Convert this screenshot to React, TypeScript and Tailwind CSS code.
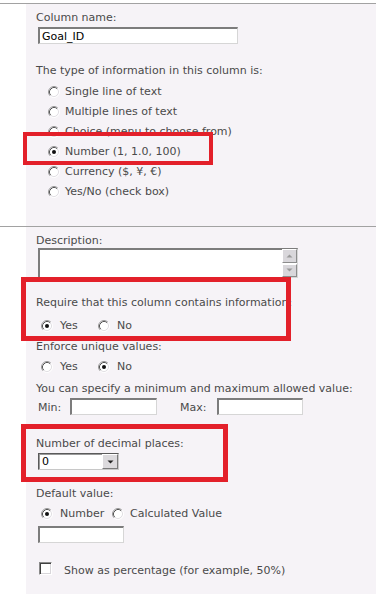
import React from "react";

function Radio({ checked = false }: { checked?: boolean }) {
  return (
    <svg width="12" height="12" viewBox="0 0 12 12" className="shrink-0">
      <circle cx="6" cy="6" r="4.6" fill="#ffffff" />
      <path d="M9.89 2.11A5.5 5.5 0 0 0 2.11 9.89" stroke="#9a9a9a" strokeWidth="1" fill="none" />
      <path d="M9.18 2.82A4.5 4.5 0 0 0 2.82 9.18" stroke="#555555" strokeWidth="1" fill="none" />
      <path d="M9.89 2.11A5.5 5.5 0 0 1 2.11 9.89" stroke="#ffffff" strokeWidth="1" fill="none" />
      <path d="M9.18 2.82A4.5 4.5 0 0 1 2.82 9.18" stroke="#e2e0e4" strokeWidth="1" fill="none" />
      {checked && <circle cx="6" cy="6" r="2" fill="#111111" />}
    </svg>
  );
}

function Checkbox() {
  return (
    <div className="w-[13px] h-[13px] shrink-0 bg-white border-t border-l border-t-[#8a8a8a] border-l-[#8a8a8a] border-r border-b border-r-[#ffffff] border-b-[#ffffff] shadow-[inset_1px_1px_0_#404040,inset_-1px_-1px_0_#d8d6da]" />
  );
}

const inputCls =
  "h-[17px] bg-white border-t-2 border-l-2 border-t-[#7c7c7c] border-l-[#7c7c7c] border-r border-b border-r-[#d6d6d6] border-b-[#d6d6d6]";

function TypeOption({ label, checked = false }: { label: string; checked?: boolean }) {
  return (
    <div className="flex items-center h-[13px] pl-[12px]">
      <Radio checked={checked} />
      <span className="ml-[5px] whitespace-nowrap">{label}</span>
    </div>
  );
}

function YesNo({ yes }: { yes: boolean }) {
  return (
    <div className="flex items-center h-[13px] pl-[5px]">
      <Radio checked={yes} />
      <span className="ml-[7px] w-[38px]">Yes</span>
      <Radio checked={!yes} />
      <span className="ml-[7px]">No</span>
    </div>
  );
}

export default function App() {
  return (
    <div
      className="relative w-[376px] h-[594px] bg-white overflow-hidden text-[11px] leading-[13px] text-[#4a4a4a]"
      style={{ fontFamily: '"DejaVu Sans", Verdana, sans-serif' }}
    >
      <div className="h-[3px]" />
      <div className="h-px bg-[#a2a2a2]" />

      {/* Section 1 */}
      <div className="flex h-[222px]">
        <div className="w-[26px] bg-white" />
        <div className="flex-1 bg-[#f6f3f7] pl-[10px] pt-[7px] flex flex-col">
          <div>Column name:</div>
          <div className={`${inputCls} mt-[3px] ml-[2px] w-[200px] flex items-center pl-[2px] text-[#000]`}>
            Goal_ID
          </div>
          <div className="mt-[20px] whitespace-nowrap">The type of information in this column is:</div>
          <div className="mt-[8px] flex flex-col gap-[7px]">
            <TypeOption label="Single line of text" />
            <TypeOption label="Multiple lines of text" />
            <TypeOption label="Choice (menu to choose from)" />
            <TypeOption label="Number (1, 1.0, 100)" checked />
            <TypeOption label="Currency ($, ¥, €)" />
            <TypeOption label="Yes/No (check box)" />
          </div>
        </div>
      </div>

      <div className="h-px bg-[#a2a2a2]" />

      {/* Section 2 */}
      <div className="flex h-[367px]">
        <div className="w-[26px] bg-white" />
        <div className="flex-1 bg-[#f6f3f7] pl-[10px] pt-[7px] flex flex-col">
          <div>Description:</div>
          <div className="mt-[1px] ml-[2px] w-[260px] h-[30px] flex bg-white border-t-2 border-l-2 border-t-[#7c7c7c] border-l-[#7c7c7c] border-r border-b border-r-[#d6d6d6] border-b-[#d6d6d6]">
            <div className="flex-1" />
            <div className="w-[15px] flex flex-col mt-[-1px]">
              <div className="h-[14px] bg-[#d9d7db] border border-t-[#ffffff] border-l-[#ffffff] border-r-[#8c8c8c] border-b-[#8c8c8c] flex items-center justify-center">
                <svg width="7" height="4" viewBox="0 0 7 4">
                  <path d="M0.5 3.5 L3.5 0.5 L6.5 3.5 Z" fill="#9a9a9a" />
                </svg>
              </div>
              <div className="h-[14px] mt-[1px] bg-[#d9d7db] border border-t-[#ffffff] border-l-[#ffffff] border-r-[#8c8c8c] border-b-[#8c8c8c] flex items-center justify-center">
                <svg width="7" height="4" viewBox="0 0 7 4">
                  <path d="M0.5 0.5 L3.5 3.5 L6.5 0.5 Z" fill="#9a9a9a" />
                </svg>
              </div>
            </div>
          </div>

          <div className="mt-[18px] whitespace-nowrap">Require that this column contains information:</div>
          <div className="mt-[10px]">
            <YesNo yes={true} />
          </div>

          <div className="mt-[8px]">Enforce unique values:</div>
          <div className="mt-[7px]">
            <YesNo yes={false} />
          </div>

          <div className="mt-[9px] whitespace-nowrap">You can specify a minimum and maximum allowed value:</div>
          <div className="mt-[3px] flex items-end pl-[2px]">
            <span className="w-[32px] leading-[14px]">Min:</span>
            <div className={`${inputCls} w-[87px]`} />
            <span className="ml-[23px] w-[37px] leading-[14px]">Max:</span>
            <div className={`${inputCls} w-[86px]`} />
          </div>

          <div className="mt-[22px]">Number of decimal places:</div>
          <div className="mt-[3px] ml-[2px] w-[81px] h-[17px] flex bg-white border border-t-[#5a5a5a] border-l-[#5a5a5a] border-r-[#c8c8c8] border-b-[#c8c8c8] shadow-[inset_1px_1px_0_#9a9a9a]">
            <div className="flex-1 pl-[3px] flex items-center text-black">0</div>
            <div className="w-[16px] h-[15px] bg-[#dcdadd] border border-t-[#ffffff] border-l-[#ffffff] border-r-[#7a7a7a] border-b-[#7a7a7a] flex items-center justify-center">
              <svg width="7" height="4" viewBox="0 0 7 4">
                <path d="M0.5 0.5 L3.5 3.5 L6.5 0.5 Z" fill="#222222" />
              </svg>
            </div>
          </div>

          <div className="mt-[17px]">Default value:</div>
          <div className="mt-[7px] flex items-center h-[13px] pl-[5px]">
            <Radio checked />
            <span className="ml-[7px] w-[52px]">Number</span>
            <Radio />
            <span className="ml-[6px] whitespace-nowrap">Calculated Value</span>
          </div>
          <div className={`${inputCls} mt-[6px] ml-[2px] w-[86px]`} />

          <div className="mt-[19px] flex items-start pl-[3px]">
            <Checkbox />
            <span className="ml-[12px] mt-[2px] whitespace-nowrap">Show as percentage (for example, 50%)</span>
          </div>
        </div>
      </div>

      {/* Red highlight boxes */}
      <div className="absolute left-[23px] top-[132px] w-[190px] h-[33px] border-4 border-[#e3202a]" />
      <div className="absolute left-[21px] top-[277px] w-[270px] h-[64px] border-[5px] border-[#e3202a]" />
      <div className="absolute left-[21px] top-[424px] w-[207px] h-[58px] border-[5px] border-[#e3202a]" />
    </div>
  );
}
